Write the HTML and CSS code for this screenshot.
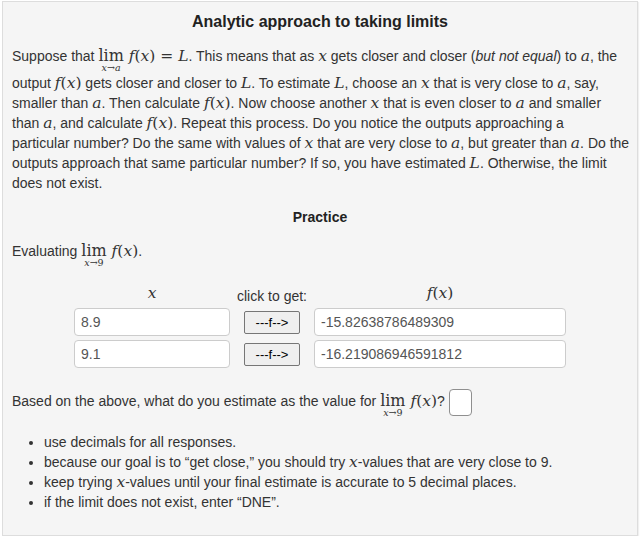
FILE: index.html
```html
<!DOCTYPE html>
<html>
<head>
<meta charset="utf-8">
<link rel="stylesheet" href="styles.css">
</head>
<body>
<div class="panel">
  <h1 class="title">Analytic approach to taking limits</h1>
  <p class="intro">Suppose that <span class="lim"><span class="lim-top">lim</span><span class="lim-sub"><i>x</i>→<i>a</i></span></span> <span class="m"><i>f</i>(<i>x</i>) = <i>L</i></span>. This means that as <span class="m"><i>x</i></span> gets closer and closer (<em>but not equal</em>) to <span class="m"><i>a</i></span>, the<br>output <span class="m"><i>f</i>(<i>x</i>)</span> gets closer and closer to <span class="m"><i>L</i></span>. To estimate <span class="m"><i>L</i></span>, choose an <span class="m"><i>x</i></span> that is very close to <span class="m"><i>a</i></span>, say,<br>smaller than <span class="m"><i>a</i></span>. Then calculate <span class="m"><i>f</i>(<i>x</i>)</span>. Now choose another <span class="m"><i>x</i></span> that is even closer to <span class="m"><i>a</i></span> and smaller<br>than <span class="m"><i>a</i></span>, and calculate <span class="m"><i>f</i>(<i>x</i>)</span>. Repeat this process. Do you notice the outputs approaching a<br>particular number? Do the same with values of <span class="m"><i>x</i></span> that are very close to <span class="m"><i>a</i></span>, but greater than <span class="m"><i>a</i></span>. Do the<br>outputs approach that same particular number? If so, you have estimated <span class="m"><i>L</i></span>. Otherwise, the limit<br>does not exist.</p>

  <h2 class="subtitle">Practice</h2>
  <p class="evaluating">Evaluating <span class="lim"><span class="lim-top">lim</span><span class="lim-sub"><i>x</i>→9</span></span> <span class="m"><i>f</i>(<i>x</i>)</span>.</p>

  <div class="calc">
    <div class="head"><span class="m"><i>x</i></span></div>
    <div class="head">click to get:</div>
    <div class="head"><span class="m"><i>f</i>(<i>x</i>)</span></div>

    <input class="field" type="text" value="8.9">
    <div class="btn-cell"><button class="fbtn">---f--&gt;</button></div>
    <input class="field" type="text" value="-15.82638786489309">

    <input class="field" type="text" value="9.1">
    <div class="btn-cell"><button class="fbtn">---f--&gt;</button></div>
    <input class="field" type="text" value="-16.219086946591812">
  </div>

  <p class="question">Based on the above, what do you estimate as the value for <span class="lim"><span class="lim-top">lim</span><span class="lim-sub"><i>x</i>→9</span></span> <span class="m"><i>f</i>(<i>x</i>)</span>?<input class="answer" type="text"></p>

  <ul class="notes">
    <li>use decimals for all responses.</li>
    <li>because our goal is to “get close,” you should try <span class="m"><i>x</i></span>-values that are very close to 9.</li>
    <li>keep trying <span class="m"><i>x</i></span>-values until your final estimate is accurate to 5 decimal places.</li>
    <li>if the limit does not exist, enter “DNE”.</li>
  </ul>
</div>
</body>
</html>
```
FILE: styles.css
```css
html, body {
  margin: 0;
  padding: 0;
  background: #ffffff;
}
body {
  font-family: "Liberation Sans", Arial, sans-serif;
  font-size: 14px;
  color: #333333;
}
.panel {
  margin: 1px 2px 0 2px;
  height: 535px;
  box-sizing: border-box;
  border: 1px solid #dddddd;
  box-shadow: 1px 1px 1px rgba(0,0,0,0.06);
  background: #f5f5f5;
  padding: 10px 6px 0 9px;
}
.title {
  margin: 0;
  font-size: 16px;
  line-height: 20px;
  font-weight: bold;
  text-align: center;
  color: #222222;
  padding-right: 3px;
}
.intro {
  margin: 14px 0 0 0;
  line-height: 20px;
}
.m {
  font-family: "DejaVu Serif", "Liberation Serif", serif;
  font-size: 15.5px;
  line-height: 1;
  white-space: nowrap;
}
.m i {
  font-style: italic;
}
.lim {
  display: inline-flex;
  flex-direction: column;
  align-items: center;
  line-height: 1;
  margin-right: 1px;
}
.lim-top {
  font-family: "DejaVu Serif", "Liberation Serif", serif;
  font-size: 16px;
  line-height: 15px;
}
.lim-sub {
  font-family: "DejaVu Serif", "Liberation Serif", serif;
  font-size: 9.5px;
  line-height: 10px;
  white-space: nowrap;
}
.subtitle {
  margin: 14px 0 0 0;
  font-size: 14px;
  line-height: 20px;
  font-weight: bold;
  text-align: center;
  color: #222222;
  padding-right: 3px;
}
.evaluating {
  margin: 14px 0 0 0;
  line-height: 20px;
}
.calc {
  display: grid;
  grid-template-columns: 156px 56px 252px;
  column-gap: 14px;
  row-gap: 4px;
  justify-content: center;
  margin-top: 16px;
  padding-right: 3px;
}
.head {
  text-align: center;
  line-height: 20px;
  white-space: nowrap;
  display: flex;
  justify-content: center;
  padding-top: 2px;
  margin-bottom: -2px;
}
.field {
  box-sizing: border-box;
  height: 28px;
  border: 1px solid #cccccc;
  border-radius: 4px;
  background: #ffffff;
  padding: 4px 6px;
  font-family: "Liberation Sans", Arial, sans-serif;
  font-size: 14px;
  color: #555555;
  margin: 0;
}
.btn-cell {
  display: flex;
  align-items: center;
}
.fbtn {
  box-sizing: border-box;
  width: 56px;
  height: 23px;
  border: 1px solid #767676;
  border-radius: 2px;
  background: #efefef;
  font-family: "Liberation Sans", Arial, sans-serif;
  font-size: 13px;
  color: #000000;
  padding: 0;
}
.question {
  margin: 21px 0 0 0;
  line-height: 20px;
}
.answer {
  box-sizing: border-box;
  width: 23px;
  height: 27px;
  border: 1px solid #8f8f8f;
  border-radius: 4px;
  background: #ffffff;
  margin: 0 0 0 4px;
  padding: 0;
  vertical-align: middle;
}
.notes {
  margin: 14px 0 0 0;
  padding-left: 32px;
  line-height: 20px;
}
```
